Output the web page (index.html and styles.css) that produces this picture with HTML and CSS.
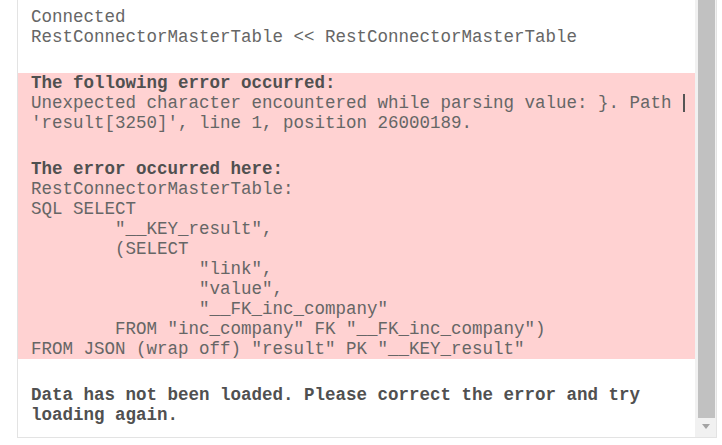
FILE: index.html
```html
<!DOCTYPE html>
<html>
<head>
<meta charset="utf-8">
<link rel="stylesheet" href="styles.css">
</head>
<body>
<div class="panel">
  <div class="content">
    <div class="block">Connected
RestConnectorMasterTable &lt;&lt; RestConnectorMasterTable</div>
    <div class="block error">
      <div class="para"><b class="head">The following error occurred:</b>
Unexpected character encountered while parsing value: }. Path <span class="caret"></span>
'result[3250]', line 1, position 26000189.</div>
      <div class="para"><b class="head">The error occurred here:</b>
RestConnectorMasterTable:
SQL SELECT
        "__KEY_result",
        (SELECT
                "link",
                "value",
                "__FK_inc_company"
        FROM "inc_company" FK "__FK_inc_company")
FROM JSON (wrap off) "result" PK "__KEY_result"</div>
    </div>
    <div class="block final"><b class="head">Data has not been loaded. Please correct the error and try
loading again.</b></div>
  </div>
  <div class="scrollbar">
    <div class="thumb"></div>
    <div class="arrow"></div>
  </div>
</div>
</body>
</html>
```
FILE: styles.css
```css
html, body {
  margin: 0;
  padding: 0;
  background: #ffffff;
  overflow: hidden;
}
body {
  width: 722px;
  height: 445px;
}
.panel {
  margin-left: 17px;
  width: 698px;
  height: 437px;
  border-left: 1px solid #e3e3e3;
  border-right: 1px solid #e3e3e3;
  border-bottom: 1px solid #e3e3e3;
  display: flex;
}
.content {
  width: 677px;
  padding-top: 7px;
  display: flex;
  flex-direction: column;
  gap: 26px;
  font-family: "Courier New", "Nimbus Mono PS", "Nimbus Mono L", "FreeMono", Courier, "Liberation Mono", monospace;
  font-size: 17.5px;
  line-height: 20px;
  color: #666666;
}
.block {
  padding-left: 13px;
  white-space: pre;
}
.error {
  background: #ffd2d2;
  display: flex;
  flex-direction: column;
  gap: 26px;
  padding-left: 0;
}
.para {
  padding-left: 13px;
  white-space: pre;
}
.head {
  font-weight: bold;
  color: #505050;
}
.caret {
  display: inline-block;
  width: 2px;
  height: 18px;
  background: #555555;
  vertical-align: -4px;
  margin-left: 1px;
}
.scrollbar {
  width: 21px;
  background: #f1f1f1;
  display: flex;
  flex-direction: column;
  align-items: center;
}
.thumb {
  width: 17px;
  height: 418px;
  margin-left: 1px;
  background: #c1c1c1;
}
.arrow {
  margin-top: 6px;
  width: 0;
  height: 0;
  border-left: 4px solid transparent;
  border-right: 4px solid transparent;
  border-top: 5px solid #a3a3a3;
}
```
